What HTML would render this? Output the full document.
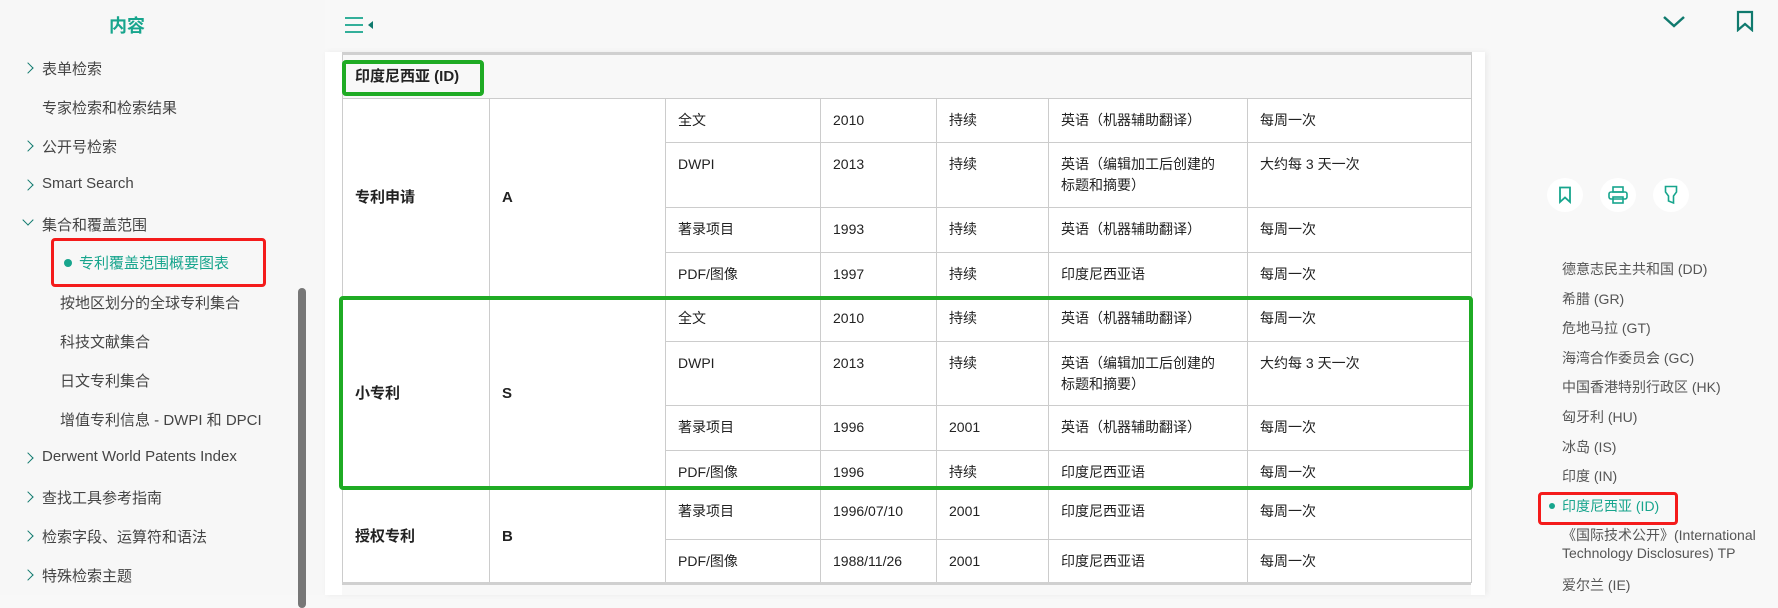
<!DOCTYPE html>
<html><head><meta charset="utf-8"><style>
*{margin:0;padding:0;box-sizing:border-box}
body{width:1778px;height:595px;overflow:hidden;background:#f8f8f8;font-family:"Liberation Sans","Noto Sans CJK SC",sans-serif;color:#333;position:relative}
.abs{position:absolute}
.side{left:0;top:0;width:325px;height:595px;background:#f7f7f7}
.title{left:0;width:254px;top:12px;text-align:center;color:#17a58d;font-weight:bold;font-size:18px}
.item{position:absolute;font-size:15px;color:#444;white-space:nowrap}
.chev{position:absolute;left:24px;width:8px;height:8px;border-right:1.6px solid #107a6e;border-bottom:1.6px solid #107a6e;transform:rotate(-45deg)}
.panel{left:325px;top:52px;width:1160px;height:543px;background:#fff;box-shadow:2px 0 6px rgba(0,0,0,.06)}
table{position:absolute;left:342px;top:52px;border-collapse:collapse;table-layout:fixed;width:1129px;font-size:14px;color:#222}
td{border:1px solid #ccc;padding:0 12px;vertical-align:top;padding-top:11px;line-height:21px}
td.w{padding-right:28px}
td.m{vertical-align:middle;padding-top:0;font-weight:bold;font-size:15px}
tr.h td{background:#f8f8f8;font-weight:bold;font-size:15px;border-top:3px solid #d0d0d0;vertical-align:middle;padding-top:0}
.gb{position:absolute;border:4px solid #1fab24;border-radius:4px}
.rb{position:absolute;border:3.5px solid #f41b1b;border-radius:4px}
.rl{position:absolute;left:1562px;font-size:14px;color:#555;white-space:nowrap}
.circ{position:absolute;width:36px;height:34px;border-radius:50%;background:#fff;top:178px}
</style></head><body>
<div class="abs side"></div>
<div class="abs title">内容</div>
<div class="chev" style="top:64px"></div><div class="item" style="left:42px;top:58px">表单检索</div>
<div class="item" style="left:42px;top:97px">专家检索和检索结果</div>
<div class="chev" style="top:142px"></div><div class="item" style="left:42px;top:136px">公开号检索</div>
<div class="chev" style="top:181px"></div><div class="item" style="left:42px;top:175px">Smart Search</div>
<div class="chev" style="top:216px;transform:rotate(45deg)"></div><div class="item" style="left:42px;top:214px">集合和覆盖范围</div>
<div class="abs" style="left:64px;top:259px;width:8px;height:8px;border-radius:50%;background:#17a58d"></div>
<div class="item" style="left:79px;top:252px;color:#17a58d">专利覆盖范围概要图表</div>
<div class="rb" style="left:51px;top:238px;width:215px;height:49px"></div>
<div class="item" style="left:60px;top:292px">按地区划分的全球专利集合</div>
<div class="item" style="left:60px;top:331px">科技文献集合</div>
<div class="item" style="left:60px;top:370px">日文专利集合</div>
<div class="item" style="left:60px;top:409px">增值专利信息 - DWPI 和 DPCI</div>
<div class="chev" style="top:454px"></div><div class="item" style="left:42px;top:448px">Derwent World Patents Index</div>
<div class="chev" style="top:493px"></div><div class="item" style="left:42px;top:487px">查找工具参考指南</div>
<div class="chev" style="top:532px"></div><div class="item" style="left:42px;top:526px">检索字段、运算符和语法</div>
<div class="chev" style="top:571px"></div><div class="item" style="left:42px;top:565px">特殊检索主题</div>
<div class="abs" style="left:298px;top:288px;width:8px;height:320px;border-radius:4px;background:#777"></div>
<svg class="abs" style="left:345px;top:16px" width="30" height="18"><g stroke="#17a58d" stroke-width="1.8"><line x1="0" y1="2" x2="18" y2="2"/><line x1="0" y1="9" x2="18" y2="9"/><line x1="0" y1="16" x2="18" y2="16"/></g><path d="M28 5 L23 9 L28 13Z" fill="#107a6e"/></svg>
<svg class="abs" style="left:1662px;top:14px" width="24" height="16"><path d="M2 3 L12 12 L22 3" stroke="#107a6e" stroke-width="2.5" fill="none"/></svg>
<svg class="abs" style="left:1736px;top:10px" width="18" height="22"><path d="M2 2 H16 V20 L9 14 L2 20Z" stroke="#107a6e" stroke-width="2.2" fill="none"/></svg>
<div class="abs panel"></div>
<table>
<colgroup><col style="width:147px"><col style="width:176px"><col style="width:155px"><col style="width:116px"><col style="width:112px"><col style="width:199px"><col style="width:224px"></colgroup>
<tr class="h" style="height:45px"><td colspan="7">印度尼西亚 (ID)</td></tr>
<tr style="height:44px"><td class="m" rowspan="4">专利申请</td><td class="m" rowspan="4">A</td><td>全文</td><td>2010</td><td>持续</td><td class="w">英语（机器辅助翻译）</td><td>每周一次</td></tr>
<tr style="height:65px"><td>DWPI</td><td>2013</td><td>持续</td><td class="w">英语（编辑加工后创建的标题和摘要）</td><td>大约每 3 天一次</td></tr>
<tr style="height:45px"><td>著录项目</td><td>1993</td><td>持续</td><td class="w">英语（机器辅助翻译）</td><td>每周一次</td></tr>
<tr style="height:44px"><td>PDF/图像</td><td>1997</td><td>持续</td><td class="w">印度尼西亚语</td><td>每周一次</td></tr>
<tr style="height:45px"><td class="m" rowspan="4">小专利</td><td class="m" rowspan="4">S</td><td>全文</td><td>2010</td><td>持续</td><td class="w">英语（机器辅助翻译）</td><td>每周一次</td></tr>
<tr style="height:64px"><td>DWPI</td><td>2013</td><td>持续</td><td class="w">英语（编辑加工后创建的标题和摘要）</td><td>大约每 3 天一次</td></tr>
<tr style="height:45px"><td>著录项目</td><td>1996</td><td>2001</td><td class="w">英语（机器辅助翻译）</td><td>每周一次</td></tr>
<tr style="height:39px"><td>PDF/图像</td><td>1996</td><td>持续</td><td class="w">印度尼西亚语</td><td>每周一次</td></tr>
<tr style="height:50px"><td class="m" rowspan="2">授权专利</td><td class="m" rowspan="2">B</td><td>著录项目</td><td>1996/07/10</td><td>2001</td><td class="w">印度尼西亚语</td><td>每周一次</td></tr>
<tr style="height:43px"><td>PDF/图像</td><td>1988/11/26</td><td>2001</td><td class="w">印度尼西亚语</td><td>每周一次</td></tr>
</table>
<div class="abs" style="left:342px;top:582px;width:1129px;height:3px;background:#d0d0d0"></div>
<div class="abs" style="left:342px;top:585px;width:1129px;height:10px;background:#f8f8f8"></div>
<div class="gb" style="left:342px;top:60px;width:142px;height:36px"></div>
<div class="gb" style="left:339px;top:296px;width:1134px;height:194px"></div>
<div class="circ" style="left:1547px"></div><div class="circ" style="left:1600px"></div><div class="circ" style="left:1653px"></div>
<svg class="abs" style="left:1558px;top:186px" width="14" height="18"><path d="M2 1.5 H12 V16 L7 11.5 L2 16Z" stroke="#17a58d" stroke-width="1.8" fill="none"/></svg>
<svg class="abs" style="left:1608px;top:186px" width="20" height="18"><g stroke="#17a58d" stroke-width="1.6" fill="none"><rect x="5" y="1" width="10" height="5"/><rect x="1" y="6" width="18" height="7" rx="2"/><rect x="5" y="11" width="10" height="6"/></g></svg>
<svg class="abs" style="left:1664px;top:185px" width="14" height="20"><path d="M1.5 1.5 H12.5 V7 L9.5 11 V18 L4.5 16 V11 L1.5 7Z" stroke="#17a58d" stroke-width="1.6" fill="none"/></svg>
<div class="rl" style="top:259px">德意志民主共和国 (DD)</div>
<div class="rl" style="top:289px">希腊 (GR)</div>
<div class="rl" style="top:318px">危地马拉 (GT)</div>
<div class="rl" style="top:348px">海湾合作委员会 (GC)</div>
<div class="rl" style="top:377px">中国香港特别行政区 (HK)</div>
<div class="rl" style="top:407px">匈牙利 (HU)</div>
<div class="rl" style="top:437px">冰岛 (IS)</div>
<div class="rl" style="top:466px">印度 (IN)</div>
<div class="abs" style="left:1549px;top:503px;width:6px;height:6px;border-radius:50%;background:#17a58d"></div>
<div class="rl" style="top:496px;color:#17a58d">印度尼西亚 (ID)</div>
<div class="rb" style="left:1538px;top:492px;width:140px;height:33px"></div>
<div class="rl" style="top:526px;line-height:18px">《国际技术公开》(International<br>Technology Disclosures) TP</div>
<div class="rl" style="top:575px">爱尔兰 (IE)</div>
</body></html>
